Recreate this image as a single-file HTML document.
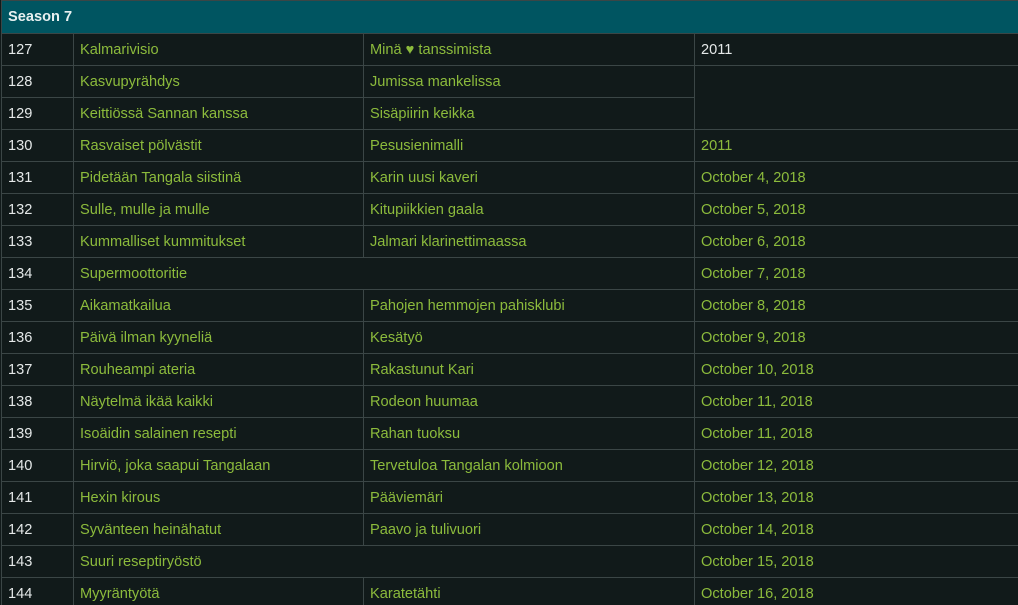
<!DOCTYPE html>
<html><head><meta charset="utf-8"><style>
html,body{margin:0;padding:0;background:#111a1a;width:1018px;height:605px;overflow:hidden}
table{border-collapse:collapse;table-layout:fixed;width:1017px;margin-left:1px;font-family:"Liberation Sans",sans-serif;font-size:14.6px}
td{border:1px solid #3b4646;height:32px;padding:0 0 0 6px;box-sizing:border-box;color:#8cbb3c;white-space:nowrap;overflow:hidden}
td:first-child{color:#e4e8e8}
th{background:#005561;color:#e8f0f0;text-align:left;font-weight:bold;height:32px;padding:0 0 0 6px;border:1px solid #3b4646;font-size:14.6px}
.w{color:#e4e8e8}
</style></head><body>
<table>
<colgroup><col style="width:72px"><col style="width:290px"><col style="width:331px"><col style="width:324px"></colgroup>
<tr><th colspan="4">Season 7</th></tr>
<tr><td>127</td><td>Kalmarivisio</td><td>Minä ♥ tanssimista</td><td class="w">2011</td></tr>
<tr><td>128</td><td>Kasvupyrähdys</td><td>Jumissa mankelissa</td><td rowspan="2"></td></tr>
<tr><td>129</td><td>Keittiössä Sannan kanssa</td><td>Sisäpiirin keikka</td></tr>
<tr><td>130</td><td>Rasvaiset pölvästit</td><td>Pesusienimalli</td><td>2011</td></tr>
<tr><td>131</td><td>Pidetään Tangala siistinä</td><td>Karin uusi kaveri</td><td>October 4, 2018</td></tr>
<tr><td>132</td><td>Sulle, mulle ja mulle</td><td>Kitupiikkien gaala</td><td>October 5, 2018</td></tr>
<tr><td>133</td><td>Kummalliset kummitukset</td><td>Jalmari klarinettimaassa</td><td>October 6, 2018</td></tr>
<tr><td>134</td><td colspan="2">Supermoottoritie</td><td>October 7, 2018</td></tr>
<tr><td>135</td><td>Aikamatkailua</td><td>Pahojen hemmojen pahisklubi</td><td>October 8, 2018</td></tr>
<tr><td>136</td><td>Päivä ilman kyyneliä</td><td>Kesätyö</td><td>October 9, 2018</td></tr>
<tr><td>137</td><td>Rouheampi ateria</td><td>Rakastunut Kari</td><td>October 10, 2018</td></tr>
<tr><td>138</td><td>Näytelmä ikää kaikki</td><td>Rodeon huumaa</td><td>October 11, 2018</td></tr>
<tr><td>139</td><td>Isoäidin salainen resepti</td><td>Rahan tuoksu</td><td>October 11, 2018</td></tr>
<tr><td>140</td><td>Hirviö, joka saapui Tangalaan</td><td>Tervetuloa Tangalan kolmioon</td><td>October 12, 2018</td></tr>
<tr><td>141</td><td>Hexin kirous</td><td>Pääviemäri</td><td>October 13, 2018</td></tr>
<tr><td>142</td><td>Syvänteen heinähatut</td><td>Paavo ja tulivuori</td><td>October 14, 2018</td></tr>
<tr><td>143</td><td colspan="2">Suuri reseptiryöstö</td><td>October 15, 2018</td></tr>
<tr><td>144</td><td>Myyräntyötä</td><td>Karatetähti</td><td>October 16, 2018</td></tr>
</table>
</body></html>
